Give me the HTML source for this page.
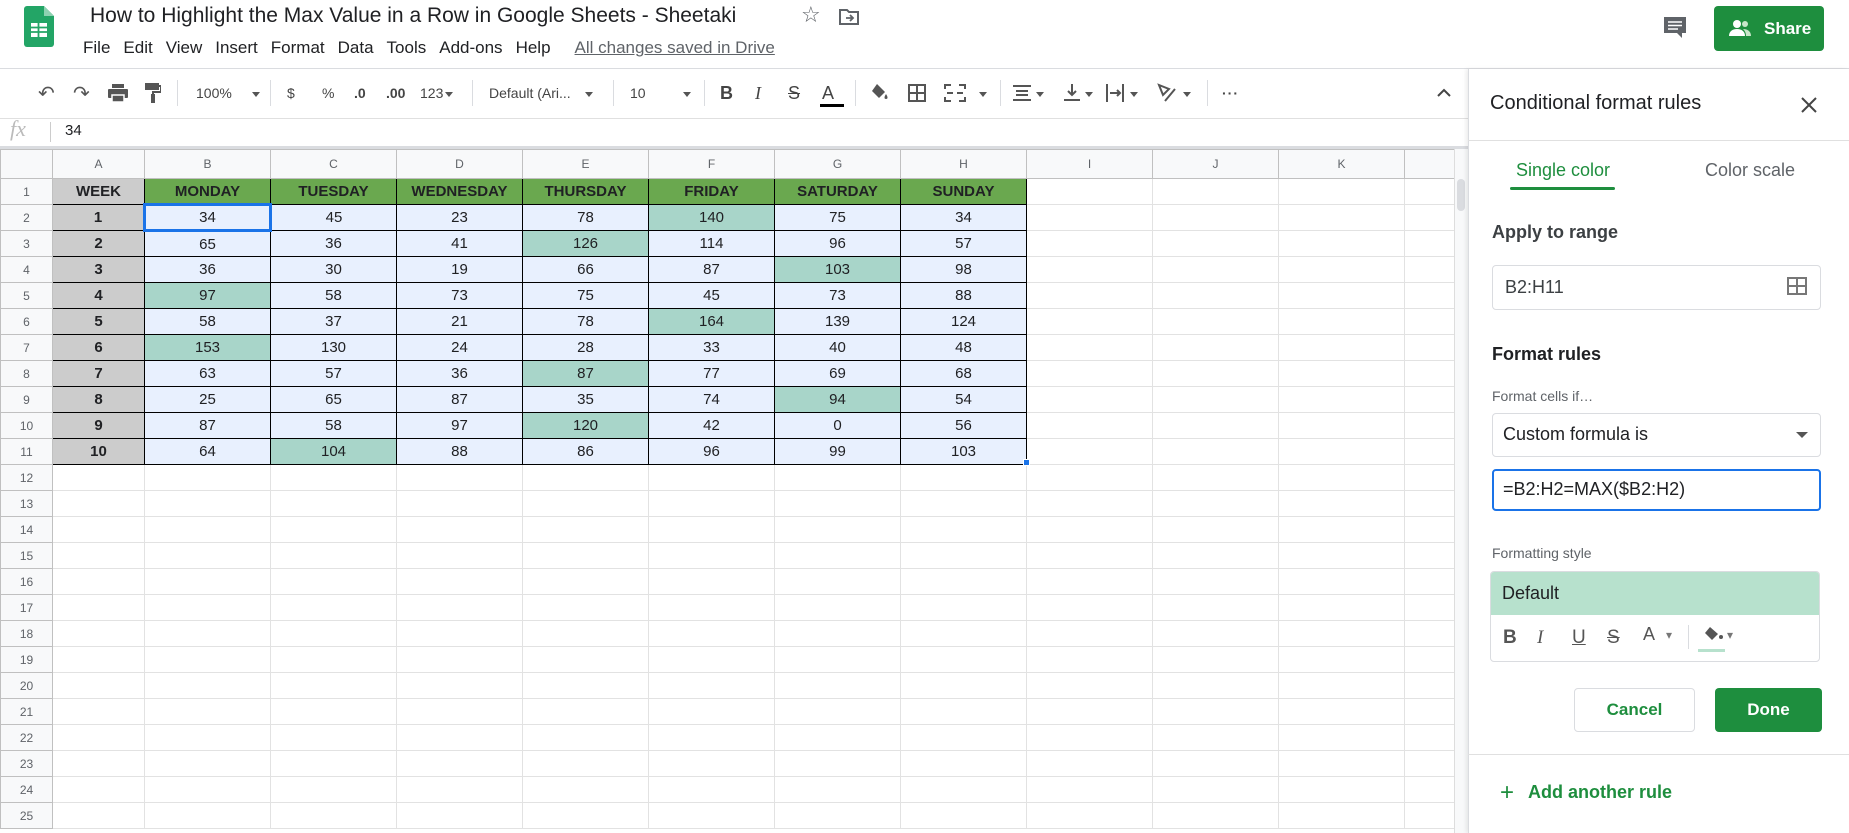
<!DOCTYPE html>
<html><head><meta charset="utf-8">
<style>
*{box-sizing:border-box;margin:0;padding:0}
body{width:1849px;height:833px;overflow:hidden;background:#fff;font-family:"Liberation Sans",Arial,sans-serif;position:relative;color:#202124}
.a{position:absolute}
.tb{position:absolute;top:82px;height:22px;line-height:22px;font-size:14px;color:#444;}
.sep{position:absolute;top:80px;width:1px;height:26px;background:#dadce0}
.caret{display:inline-block;width:0;height:0;border-left:4px solid transparent;border-right:4px solid transparent;border-top:5px solid #555;vertical-align:middle}
table{border-collapse:collapse;table-layout:fixed;position:absolute;left:0;top:149px}
td{border:1px solid #e2e2e2;height:26px;font-size:15px;text-align:center;padding:0;white-space:nowrap;overflow:hidden}
tr.h td{height:29px;background:#f8f9fa;color:#5f6368;font-size:12px;border-color:#c0c0c0}
td.rh{background:#f8f9fa;color:#5f6368;font-size:12px;border-color:#c0c0c0}
td.d{background:#e8f0fe;border:1px solid #000}
td.g{background:#a8d5c9;border:1px solid #000}
td.w{background:#cccccc;font-weight:bold;border:1px solid #000}
td.hd{background:#6aa84f;font-weight:bold;border:1px solid #000}
.pt{font-family:"DejaVu Sans",sans-serif}
</style></head><body>
<!-- logo -->
<svg class="a" style="left:24px;top:6px" width="30" height="41" viewBox="0 0 30 41"><path d="M3 0h17l10 10v28a3 3 0 0 1-3 3H3a3 3 0 0 1-3-3V3a3 3 0 0 1 3-3z" fill="#23a566"/><path d="M20 0v10h10z" fill="#8ed1b1"/><rect x="7" y="17" width="16" height="14" fill="#fff"/><path d="M7 21.5h16M7 26h16M14.5 17v14" stroke="#23a566" stroke-width="1.8"/></svg>
<div class="a" style="left:90px;top:4px;font-size:21px;color:#202124">How to Highlight the Max Value in a Row in Google Sheets - Sheetaki</div>
<div class="a pt" style="left:801px;top:3px;font-size:22px;color:#5f6368">☆</div>
<svg class="a" style="left:838px;top:8px" width="22" height="18" viewBox="0 0 22 18"><path d="M2 2h7l2 2h9v12H2z" fill="none" stroke="#5f6368" stroke-width="2"/><path d="M8 10h7M12 7l3 3-3 3" stroke="#5f6368" stroke-width="1.8" fill="none"/></svg>
<div class="a" style="left:83px;top:38px;font-size:17px;word-spacing:0;color:#202124">
<span style="margin-right:13px">File</span><span style="margin-right:13px">Edit</span><span style="margin-right:13px">View</span><span style="margin-right:13px">Insert</span><span style="margin-right:13px">Format</span><span style="margin-right:13px">Data</span><span style="margin-right:13px">Tools</span><span style="margin-right:13px">Add-ons</span><span style="margin-right:24px">Help</span><span style="color:#5f6368;text-decoration:underline">All changes saved in Drive</span></div>
<svg class="a" style="left:1662px;top:15px" width="26" height="24" viewBox="0 0 26 24"><path d="M2 2h22v16h-4v5l-5-5H2z" fill="#5f6368"/><path d="M6 7h14M6 10.5h14M6 14h10" stroke="#fff" stroke-width="1.5"/></svg>
<div class="a" style="left:1714px;top:6px;width:110px;height:45px;background:#1e8e3e;border-radius:4px;color:#fff;font-size:17px;font-weight:bold;line-height:45px;padding-left:50px">Share</div>
<svg class="a" style="left:1728px;top:19px" width="24" height="18" viewBox="0 0 24 18"><circle cx="9" cy="5" r="4" fill="#fff"/><path d="M1 17c0-5 4-7 8-7s8 2 8 7z" fill="#fff"/><circle cx="17" cy="5" r="3" fill="#c8e6c9"/><path d="M15 10c4 0 8 2 8 7h-5c0-3-1-5-3-7z" fill="#c8e6c9"/></svg>
<div class="a" style="left:0;top:68px;width:1849px;height:1px;background:#dadce0"></div>
<!-- toolbar -->
<div class="tb pt" style="left:38px;font-size:20px;color:#555">↶</div>
<div class="tb pt" style="left:73px;font-size:20px;color:#555">↷</div>
<svg class="a" style="left:108px;top:84px" width="20" height="18" viewBox="0 0 20 18"><rect x="4" y="0" width="12" height="4" fill="#555"/><rect x="0" y="5" width="20" height="9" rx="1" fill="#555"/><rect x="4" y="11" width="12" height="7" fill="#555" stroke="#fff" stroke-width="1.5"/></svg>
<svg class="a" style="left:145px;top:83px" width="16" height="20" viewBox="0 0 16 20"><rect x="0" y="0" width="14" height="7" fill="#555"/><path d="M14 3h2v6H8v3" fill="none" stroke="#555" stroke-width="2"/><rect x="6" y="11" width="4" height="9" fill="#555"/></svg>
<div class="sep" style="left:177px"></div>
<div class="tb" style="left:196px">100% <span class="caret" style="margin-left:16px"></span></div>
<div class="sep" style="left:270px"></div>
<div class="tb" style="left:287px">$</div>
<div class="tb" style="left:322px">%</div>
<div class="tb" style="left:354px;font-weight:bold">.0</div>
<div class="tb" style="left:386px;font-weight:bold">.00</div>
<div class="tb" style="left:420px">123<span class="caret" style="margin-left:2px"></span></div>
<div class="sep" style="left:472px"></div>
<div class="tb" style="left:489px">Default (Ari... <span class="caret" style="margin-left:10px"></span></div>
<div class="sep" style="left:613px"></div>
<div class="tb" style="left:630px">10 <span class="caret" style="margin-left:34px"></span></div>
<div class="sep" style="left:704px"></div>
<div class="tb" style="left:720px;font-weight:bold;font-size:18px">B</div>
<div class="tb" style="left:755px;font-style:italic;font-size:18px;font-family:'Liberation Serif',serif">I</div>
<div class="tb" style="left:788px;font-size:18px;text-decoration:line-through">S</div>
<div class="tb" style="left:822px;font-size:18px">A</div>
<div class="a" style="left:820px;top:104px;width:24px;height:3px;background:#000"></div>
<div class="sep" style="left:855px"></div>
<svg class="a" style="left:870px;top:83px" width="20" height="20" viewBox="0 0 20 20"><path d="M7 1l8 8-6 6-7-7z" fill="#555"/><path d="M16 11c2 3 2 5 0 5s-2-2 0-5z" fill="#555"/></svg>
<svg class="a" style="left:908px;top:84px" width="18" height="18" viewBox="0 0 18 18"><rect x="1" y="1" width="16" height="16" fill="none" stroke="#555" stroke-width="2"/><path d="M9 1v16M1 9h16" stroke="#555" stroke-width="2"/></svg>
<svg class="a" style="left:944px;top:84px" width="22" height="18" viewBox="0 0 22 18"><path d="M1 5V1h6M15 1h6v4M1 13v4h6M15 17h6v-4M3 9h6M13 9h6" stroke="#555" stroke-width="2" fill="none"/></svg>
<span class="caret a" style="left:979px;top:92px"></span>
<div class="sep" style="left:1000px"></div>
<svg class="a" style="left:1013px;top:85px" width="18" height="16" viewBox="0 0 18 16"><path d="M0 1h18M3 6h12M3 10h12M0 15h18" stroke="#555" stroke-width="2"/></svg>
<span class="caret a" style="left:1036px;top:92px"></span>
<svg class="a" style="left:1064px;top:84px" width="16" height="18" viewBox="0 0 16 18"><path d="M8 0v11M4 7l4 4 4-4M0 16h16" stroke="#555" stroke-width="2" fill="none"/></svg>
<span class="caret a" style="left:1085px;top:92px"></span>
<svg class="a" style="left:1106px;top:84px" width="18" height="18" viewBox="0 0 18 18"><path d="M1 0v18M17 0v18M4 9h10M11 6l3 3-3 3" stroke="#555" stroke-width="2" fill="none"/></svg>
<span class="caret a" style="left:1130px;top:92px"></span>
<svg class="a" style="left:1157px;top:83px" width="20" height="20" viewBox="0 0 20 20"><path d="M2 2l10 4-6 6zM8 18L18 6" stroke="#555" stroke-width="2" fill="none"/></svg>
<span class="caret a" style="left:1183px;top:92px"></span>
<div class="sep" style="left:1207px"></div>
<div class="tb" style="left:1222px;font-weight:bold;letter-spacing:1px">···</div>
<svg class="a" style="left:1437px;top:88px" width="14" height="9" viewBox="0 0 14 9"><path d="M1 8l6-6 6 6" stroke="#444" stroke-width="2" fill="none"/></svg>
<div class="a" style="left:0;top:118px;width:1468px;height:1px;background:#e0e0e0"></div>
<!-- formula bar -->
<div class="a" style="left:10px;top:116px;font-size:22px;font-style:italic;font-family:'Liberation Serif',serif;color:#bbb">fx</div>
<div class="a" style="left:50px;top:122px;width:1px;height:20px;background:#ccc"></div>
<div class="a" style="left:65px;top:122px;font-size:15px">34</div>
<div class="a" style="left:0;top:146px;width:1468px;height:3px;background:#dadce0"></div>
<!-- grid -->
<table>
<colgroup><col style="width:52px"><col style="width:92px"><col style="width:126px"><col style="width:126px"><col style="width:126px"><col style="width:126px"><col style="width:126px"><col style="width:126px"><col style="width:126px"><col style="width:126px"><col style="width:126px"><col style="width:126px"><col style="width:50px"></colgroup>
<tr class="h"><td></td><td>A</td><td>B</td><td>C</td><td>D</td><td>E</td><td>F</td><td>G</td><td>H</td><td>I</td><td>J</td><td>K</td><td></td></tr>
<tr><td class="rh">1</td><td class="w">WEEK</td><td class="hd">MONDAY</td><td class="hd">TUESDAY</td><td class="hd">WEDNESDAY</td><td class="hd">THURSDAY</td><td class="hd">FRIDAY</td><td class="hd">SATURDAY</td><td class="hd">SUNDAY</td><td></td><td></td><td></td><td></td></tr>
<tr><td class="rh">2</td><td class="w">1</td><td class="d" style="border:3px solid #1a73e8">34</td><td class="d">45</td><td class="d">23</td><td class="d">78</td><td class="g">140</td><td class="d">75</td><td class="d">34</td><td></td><td></td><td></td><td></td></tr>
<tr><td class="rh">3</td><td class="w">2</td><td class="d">65</td><td class="d">36</td><td class="d">41</td><td class="g">126</td><td class="d">114</td><td class="d">96</td><td class="d">57</td><td></td><td></td><td></td><td></td></tr>
<tr><td class="rh">4</td><td class="w">3</td><td class="d">36</td><td class="d">30</td><td class="d">19</td><td class="d">66</td><td class="d">87</td><td class="g">103</td><td class="d">98</td><td></td><td></td><td></td><td></td></tr>
<tr><td class="rh">5</td><td class="w">4</td><td class="g">97</td><td class="d">58</td><td class="d">73</td><td class="d">75</td><td class="d">45</td><td class="d">73</td><td class="d">88</td><td></td><td></td><td></td><td></td></tr>
<tr><td class="rh">6</td><td class="w">5</td><td class="d">58</td><td class="d">37</td><td class="d">21</td><td class="d">78</td><td class="g">164</td><td class="d">139</td><td class="d">124</td><td></td><td></td><td></td><td></td></tr>
<tr><td class="rh">7</td><td class="w">6</td><td class="g">153</td><td class="d">130</td><td class="d">24</td><td class="d">28</td><td class="d">33</td><td class="d">40</td><td class="d">48</td><td></td><td></td><td></td><td></td></tr>
<tr><td class="rh">8</td><td class="w">7</td><td class="d">63</td><td class="d">57</td><td class="d">36</td><td class="g">87</td><td class="d">77</td><td class="d">69</td><td class="d">68</td><td></td><td></td><td></td><td></td></tr>
<tr><td class="rh">9</td><td class="w">8</td><td class="d">25</td><td class="d">65</td><td class="d">87</td><td class="d">35</td><td class="d">74</td><td class="g">94</td><td class="d">54</td><td></td><td></td><td></td><td></td></tr>
<tr><td class="rh">10</td><td class="w">9</td><td class="d">87</td><td class="d">58</td><td class="d">97</td><td class="g">120</td><td class="d">42</td><td class="d">0</td><td class="d">56</td><td></td><td></td><td></td><td></td></tr>
<tr><td class="rh">11</td><td class="w">10</td><td class="d">64</td><td class="g">104</td><td class="d">88</td><td class="d">86</td><td class="d">96</td><td class="d">99</td><td class="d">103</td><td></td><td></td><td></td><td></td></tr>
<tr><td class="rh">12</td><td></td><td></td><td></td><td></td><td></td><td></td><td></td><td></td><td></td><td></td><td></td><td></td></tr>
<tr><td class="rh">13</td><td></td><td></td><td></td><td></td><td></td><td></td><td></td><td></td><td></td><td></td><td></td><td></td></tr>
<tr><td class="rh">14</td><td></td><td></td><td></td><td></td><td></td><td></td><td></td><td></td><td></td><td></td><td></td><td></td></tr>
<tr><td class="rh">15</td><td></td><td></td><td></td><td></td><td></td><td></td><td></td><td></td><td></td><td></td><td></td><td></td></tr>
<tr><td class="rh">16</td><td></td><td></td><td></td><td></td><td></td><td></td><td></td><td></td><td></td><td></td><td></td><td></td></tr>
<tr><td class="rh">17</td><td></td><td></td><td></td><td></td><td></td><td></td><td></td><td></td><td></td><td></td><td></td><td></td></tr>
<tr><td class="rh">18</td><td></td><td></td><td></td><td></td><td></td><td></td><td></td><td></td><td></td><td></td><td></td><td></td></tr>
<tr><td class="rh">19</td><td></td><td></td><td></td><td></td><td></td><td></td><td></td><td></td><td></td><td></td><td></td><td></td></tr>
<tr><td class="rh">20</td><td></td><td></td><td></td><td></td><td></td><td></td><td></td><td></td><td></td><td></td><td></td><td></td></tr>
<tr><td class="rh">21</td><td></td><td></td><td></td><td></td><td></td><td></td><td></td><td></td><td></td><td></td><td></td><td></td></tr>
<tr><td class="rh">22</td><td></td><td></td><td></td><td></td><td></td><td></td><td></td><td></td><td></td><td></td><td></td><td></td></tr>
<tr><td class="rh">23</td><td></td><td></td><td></td><td></td><td></td><td></td><td></td><td></td><td></td><td></td><td></td><td></td></tr>
<tr><td class="rh">24</td><td></td><td></td><td></td><td></td><td></td><td></td><td></td><td></td><td></td><td></td><td></td><td></td></tr>
<tr><td class="rh">25</td><td></td><td></td><td></td><td></td><td></td><td></td><td></td><td></td><td></td><td></td><td></td><td></td></tr>
</table>
<div class="a" style="left:1023px;top:459px;width:7px;height:7px;background:#1a73e8;border:1px solid #fff"></div>
<div class="a" style="left:1454px;top:149px;width:14px;height:684px;background:#f8f9fa;border-left:1px solid #ddd"></div>
<div class="a" style="left:1457px;top:179px;width:8px;height:32px;background:#dadce0;border-radius:4px"></div>
<!-- side panel -->
<div class="a" style="left:1468px;top:69px;width:381px;height:764px;background:#fff;border-left:1px solid #dadce0;box-shadow:-2px 0 4px rgba(0,0,0,.08)"></div>
<div class="a" style="left:1490px;top:92px;font-size:20px;color:#202124">Conditional format rules</div>
<svg class="a" style="left:1801px;top:97px" width="16" height="16" viewBox="0 0 16 16"><path d="M1 1l14 14M15 1L1 15" stroke="#444" stroke-width="2"/></svg>
<div class="a" style="left:1468px;top:140px;width:381px;height:1px;background:#e0e0e0"></div>
<div class="a" style="left:1516px;top:160px;font-size:18px;color:#1e8e3e">Single color</div>
<div class="a" style="left:1510px;top:187px;width:105px;height:3px;background:#1e8e3e;border-radius:2px"></div>
<div class="a" style="left:1705px;top:160px;font-size:18px;color:#5f6368">Color scale</div>
<div class="a" style="left:1492px;top:222px;font-size:18px;color:#3c4043;font-weight:bold;font-weight:600">Apply to range</div>
<div class="a" style="left:1492px;top:265px;width:329px;height:45px;border:1px solid #dadce0;border-radius:4px"></div>
<div class="a" style="left:1505px;top:277px;font-size:18px;color:#3c4043">B2:H11</div>
<svg class="a" style="left:1787px;top:277px" width="20" height="18" viewBox="0 0 20 18"><rect x="1" y="1" width="18" height="16" fill="none" stroke="#777" stroke-width="2"/><path d="M10 1v16M1 9h18" stroke="#777" stroke-width="2"/></svg>
<div class="a" style="left:1492px;top:344px;font-size:18px;color:#202124;font-weight:600">Format rules</div>
<div class="a" style="left:1492px;top:388px;font-size:14px;color:#5f6368">Format cells if…</div>
<div class="a" style="left:1492px;top:413px;width:329px;height:44px;border:1px solid #dadce0;border-radius:4px"></div>
<div class="a" style="left:1503px;top:424px;font-size:18px;color:#202124">Custom formula is</div>
<span class="caret a" style="left:1796px;top:432px;border-left-width:6px;border-right-width:6px;border-top-width:6px"></span>
<div class="a" style="left:1492px;top:469px;width:329px;height:42px;border:2px solid #1a73e8;border-radius:4px"></div>
<div class="a" style="left:1503px;top:479px;font-size:18px;color:#202124">=B2:H2=MAX($B2:H2)</div>
<div class="a" style="left:1492px;top:545px;font-size:14px;color:#5f6368">Formatting style</div>
<div class="a" style="left:1490px;top:571px;width:330px;height:91px;border:1px solid #dadce0;border-radius:4px;overflow:hidden"><div style="height:43px;background:#b7e1cd;font-size:18px;line-height:43px;padding-left:11px;color:#202124">Default</div></div>
<div class="a" style="left:1503px;top:627px;font-size:19px;font-weight:bold;color:#555">B</div>
<div class="a" style="left:1537px;top:627px;font-size:19px;font-style:italic;font-family:'Liberation Serif',serif;color:#555">I</div>
<div class="a" style="left:1572px;top:627px;font-size:19px;text-decoration:underline;color:#555">U</div>
<div class="a" style="left:1607px;top:627px;font-size:19px;text-decoration:line-through;color:#555">S</div>
<div class="a" style="left:1643px;top:624px;font-size:18px;color:#555">A</div>
<div class="a" style="left:1666px;top:628px;font-size:12px;color:#777">▾</div>
<div class="a" style="left:1688px;top:625px;width:1px;height:24px;background:#dadce0"></div>
<svg class="a" style="left:1702px;top:626px" width="22" height="16" viewBox="0 0 22 16"><path d="M8 1l8 7-6 6-7-7z" fill="#555"/><circle cx="19" cy="11" r="2" fill="#555"/></svg>
<div class="a" style="left:1698px;top:649px;width:27px;height:3px;background:#b7e1cd"></div>
<div class="a" style="left:1727px;top:628px;font-size:12px;color:#777">▾</div>
<div class="a" style="left:1574px;top:688px;width:121px;height:44px;border:1px solid #dadce0;border-radius:4px;color:#1e8e3e;font-size:17px;text-align:center;line-height:42px;font-weight:600">Cancel</div>
<div class="a" style="left:1715px;top:688px;width:107px;height:44px;background:#1e8e3e;border-radius:4px;color:#fff;font-size:17px;text-align:center;line-height:44px;font-weight:bold">Done</div>
<div class="a" style="left:1468px;top:754px;width:381px;height:1px;background:#e0e0e0"></div>
<div class="a" style="left:1500px;top:779px;font-size:18px;color:#1e8e3e;font-weight:600"><span style="font-size:24px;font-weight:normal;margin-right:14px;vertical-align:-2px">+</span>Add another rule</div>
</body></html>
